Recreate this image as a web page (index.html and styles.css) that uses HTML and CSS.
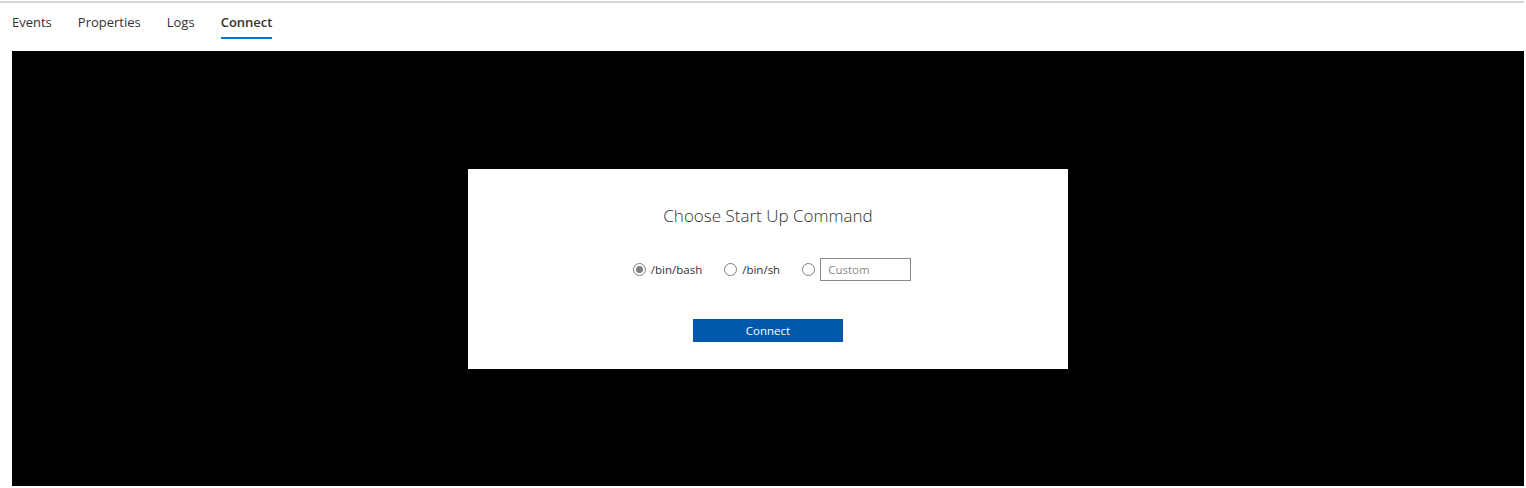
FILE: index.html
```html
<!DOCTYPE html>
<html>
<head>
<meta charset="utf-8">
<link rel="stylesheet" href="styles.css">
</head>
<body>
<div class="page">
  <div class="topline"></div>
  <nav class="tabs">
    <span class="tab">Events</span>
    <span class="tab">Properties</span>
    <span class="tab">Logs</span>
    <span class="tab active">Connect</span>
  </nav>
  <div class="console-wrap">
    <div class="console">
      <div class="dialog">
        <h2 class="title">Choose Start Up Command</h2>
        <div class="options">
          <label class="opt"><span class="radio checked"></span><span class="opt-text">/bin/bash</span></label>
          <label class="opt"><span class="radio"></span><span class="opt-text">/bin/sh</span></label>
          <label class="opt"><span class="radio"></span><input class="custom" type="text" placeholder="Custom"></label>
        </div>
        <button class="connect-btn">Connect</button>
      </div>
    </div>
  </div>
</div>
</body>
</html>
```

FILE: styles.css
```css
html, body {
  margin: 0;
  padding: 0;
  background: #ffffff;
}
body {
  font-family: "Open Sans", "Noto Sans", sans-serif;
  color: #323130;
}
.page {
  width: 1526px;
  height: 488px;
  padding-top: 1px;
  box-sizing: border-box;
  display: flex;
  flex-direction: column;
}
.topline {
  height: 2px;
  background: #d6d6d6;
  margin-right: 2px;
}
.tabs {
  display: flex;
  gap: 26px;
  padding-left: 12px;
  height: 48px;
  align-items: flex-start;
  box-sizing: border-box;
  padding-top: 8px;
}
.tab {
  font-size: 13px;
  line-height: 22px;
  color: #323130;
  padding-bottom: 4px;
  border-bottom: 2px solid transparent;
}
.tab.active {
  font-weight: 600;
  border-bottom-color: #0078d4;
}
.console-wrap {
  padding: 0 2px 2px 12px;
  flex: 1;
  display: flex;
}
.console {
  flex: 1;
  background: #000000;
  display: flex;
  align-items: center;
  justify-content: center;
}
.dialog {
  width: 600px;
  height: 200px;
  background: #ffffff;
  display: flex;
  flex-direction: column;
  align-items: center;
  box-sizing: border-box;
  padding-top: 35px;
}
.title {
  margin: 0;
  font-size: 17px;
  font-weight: 300;
  line-height: 24px;
  color: #323130;
}
.options {
  display: flex;
  align-items: center;
  gap: 22px;
  margin-top: 30px;
  height: 24px;
  padding-left: 8px;
}
.opt {
  display: flex;
  align-items: center;
  gap: 5px;
  font-size: 11.5px;
  color: #323130;
}
.radio {
  width: 11px;
  height: 11px;
  border: 1px solid #808080;
  border-radius: 50%;
  position: relative;
  box-sizing: content-box;
}
.radio.checked::after {
  content: "";
  position: absolute;
  left: 2px;
  top: 2px;
  width: 7px;
  height: 7px;
  border-radius: 50%;
  background: #808080;
}
.custom {
  width: 91px;
  height: 23px;
  box-sizing: border-box;
  border: 1px solid #8a8886;
  padding: 0 7px;
  font-family: "Open Sans", "Noto Sans", sans-serif;
  font-size: 11.5px;
  color: #323130;
  outline: none;
  margin: 0;
}
.custom::placeholder {
  color: #8a8886;
}
.connect-btn {
  margin-top: 37px;
  width: 150px;
  height: 23px;
  border: none;
  background: #0058ad;
  color: #ffffff;
  font-family: "Open Sans", "Noto Sans", sans-serif;
  font-size: 11.5px;
  padding: 0;
}
```
